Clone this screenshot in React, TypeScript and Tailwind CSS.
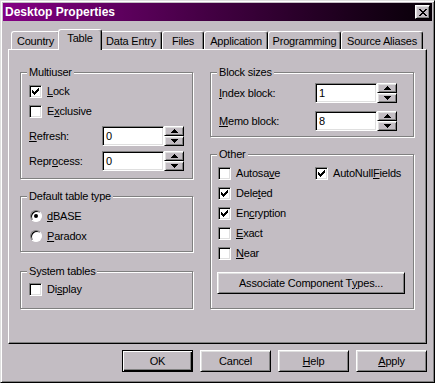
import type { ReactNode } from 'react'

const sunken =
  'border border-t-[#808080] border-l-[#808080] border-b-white border-r-white shadow-[inset_1px_1px_#000,inset_-1px_-1px_#dfdfdf]'
const raised =
  'border border-t-white border-l-white border-b-black border-r-black shadow-[inset_1px_1px_#dfdfdf,inset_-1px_-1px_#808080]'

function CheckBox({ checked }: { checked?: boolean }) {
  return (
    <span className={`w-[13px] h-[13px] shrink-0 bg-white flex items-center justify-center ${sunken}`}>
      {checked && (
        <svg width="7" height="7" viewBox="0 0 7 7" shapeRendering="crispEdges">
          <path
            d="M6 0h1v1h-1z M5 1h2v1h-2z M0 2h1v1h-1z M4 2h3v1h-3z M0 3h2v1h-2z M3 3h3v1h-3z M0 4h5v1h-5z M1 5h3v1h-3z M2 6h1v1h-1z"
            fill="#000"
          />
        </svg>
      )}
    </span>
  )
}

function Radio({ on }: { on?: boolean }) {
  return (
    <span className="w-[12px] h-[12px] shrink-0 rounded-full bg-white border border-t-[#808080] border-l-[#808080] border-b-white border-r-white shadow-[inset_1px_1px_#000] flex items-center justify-center">
      {on && <span className="w-[4px] h-[4px] rounded-full bg-black" />}
    </span>
  )
}

function Row({ children }: { children: ReactNode }) {
  return <div className="h-[20px] flex items-center gap-[5px]">{children}</div>
}

function Arrow({ up }: { up?: boolean }) {
  return (
    <svg width="7" height="4" viewBox="0 0 7 4" shapeRendering="crispEdges">
      <path
        d={
          up
            ? 'M3 0h1v1h-1z M2 1h3v1h-3z M1 2h5v1h-5z M0 3h7v1h-7z'
            : 'M0 0h7v1h-7z M1 1h5v1h-5z M2 2h3v1h-3z M3 3h1v1h-1z'
        }
        fill="#000"
      />
    </svg>
  )
}

function Spin({ value }: { value: string }) {
  return (
    <div className="flex">
      <div className={`w-[62px] h-[20px] bg-white pl-[3px] flex items-center ${sunken}`}>{value}</div>
      <div className="w-[20px] h-[20px] flex flex-col">
        <div className={`h-[10px] flex items-center justify-center bg-[#c3bdc3] ${raised}`}>
          <Arrow up />
        </div>
        <div className={`h-[10px] flex items-center justify-center bg-[#c3bdc3] ${raised}`}>
          <Arrow />
        </div>
      </div>
    </div>
  )
}

function Group({ title, className, children }: { title: string; className: string; children: ReactNode }) {
  return (
    <div className={`relative border border-[#808080] shadow-[inset_1px_1px_#fff,1px_1px_#fff] ${className}`}>
      <span className="absolute -top-[7px] left-[6px] px-[2px] bg-[#c3bdc3] leading-[13px]">{title}</span>
      {children}
    </div>
  )
}

function Tab({ label, w, active }: { label: string; w: string; active?: boolean }) {
  if (active) {
    return (
      <div
        className={`${w} -mx-[2px] -mb-px h-[21px] relative z-10 bg-[#c3bdc3] rounded-t-[3px] border-t border-l border-r border-t-white border-l-white border-r-black shadow-[inset_-1px_0_#808080] flex justify-center pt-[2px]`}
      >
        {label}
      </div>
    )
  }
  return (
    <div
      className={`${w} h-[18px] rounded-t-[3px] border-t border-l border-r border-t-white border-l-white border-r-black shadow-[inset_-1px_0_#808080] flex items-center justify-center pt-px`}
    >
      {label}
    </div>
  )
}

function Button({ children, def, w = 'w-[71px]' }: { children: ReactNode; def?: boolean; w?: string }) {
  const frame = def
    ? 'border border-black shadow-[inset_1px_1px_#fff,inset_-1px_-1px_#000,inset_-2px_-2px_#808080]'
    : raised
  return <div className={`${w} h-[22px] flex items-center justify-center bg-[#c3bdc3] ${frame}`}>{children}</div>
}

export default function App() {
  return (
    <div className="w-[435px] h-[383px] p-[2px] bg-[#c3bdc3] border border-t-[#dfdfdf] border-l-[#dfdfdf] border-b-black border-r-black shadow-[inset_1px_1px_#fff,inset_-1px_-1px_#808080] font-['Liberation_Sans',Arial,sans-serif] text-[11px] tracking-[-0.2px] text-black leading-[13px] select-none">
      {/* title bar */}
      <div className="h-[18px] flex items-center justify-between bg-gradient-to-r from-[#840084] to-[#080008] pl-[2px] pr-[2px]">
        <span className="text-white font-bold text-[12px] tracking-normal">Desktop Properties</span>
        <div className={`w-[15px] h-[14px] bg-[#c3bdc3] flex items-center justify-center ${raised}`}>
          <svg width="8" height="7" viewBox="0 0 8 7" shapeRendering="crispEdges">
            <path
              d="M0 0h2v1h-2z M6 0h2v1h-2z M1 1h2v1h-2z M5 1h2v1h-2z M2 2h4v1h-4z M3 3h2v1h-2z M2 4h4v1h-4z M1 5h2v1h-2z M5 5h2v1h-2z M0 6h2v1h-2z M6 6h2v1h-2z"
              fill="#000"
            />
          </svg>
        </div>
      </div>

      {/* tabs */}
      <div className="mt-[8px] pl-[8px] flex items-end">
        <Tab label="Country" w="w-[49px]" />
        <Tab label="Table" w="w-[44px]" active />
        <Tab label="Data Entry" w="w-[62px]" />
        <Tab label="Files" w="w-[42px]" />
        <Tab label="Application" w="w-[64px]" />
        <Tab label="Programming" w="w-[73px]" />
        <Tab label="Source Aliases" w="w-[82px]" />
      </div>

      {/* tab page */}
      <div className="ml-[5px] w-[419px] h-[295px] border border-t-white border-l-white border-b-black border-r-black shadow-[inset_-1px_-1px_#808080] pt-[22px] pl-[11px] flex gap-[17px]">
        <div className="w-[173px] flex flex-col">
          <Group title="Multiuser" className="h-[107px] pt-[8px] pl-[8px]">
            <Row>
              <CheckBox checked />
              <span>
                <u>L</u>ock
              </span>
            </Row>
            <Row>
              <CheckBox />
              <span>
                E<u>x</u>clusive
              </span>
            </Row>
            <div className="mt-[5px] flex items-center">
              <span className="w-[73px]">
                <u>R</u>efresh:
              </span>
              <Spin value="0" />
            </div>
            <div className="mt-[5px] flex items-center">
              <span className="w-[73px]">
                Repr<u>o</u>cess:
              </span>
              <Spin value="0" />
            </div>
          </Group>

          <Group title="Default table type" className="mt-[17px] h-[56px] pt-[9px] pl-[9px]">
            <Row>
              <Radio on />
              <span>
                <u>d</u>BASE
              </span>
            </Row>
            <Row>
              <Radio />
              <span>
                <u>P</u>aradox
              </span>
            </Row>
          </Group>

          <Group title="System tables" className="mt-[19px] h-[38px] pt-[7px] pl-[8px]">
            <Row>
              <CheckBox />
              <span>
                Di<u>s</u>play
              </span>
            </Row>
          </Group>
        </div>

        <div className="w-[204px] flex flex-col">
          <Group title="Block sizes" className="h-[65px] pt-[10px] pl-[8px]">
            <div className="flex items-center">
              <span className="w-[96px]">
                <u>I</u>ndex block:
              </span>
              <Spin value="1" />
            </div>
            <div className="mt-[8px] flex items-center">
              <span className="w-[96px]">
                <u>M</u>emo block:
              </span>
              <Spin value="8" />
            </div>
          </Group>

          <Group title="Other" className="mt-[17px] h-[155px] pt-[8px] pl-[7px]">
            <div className="grid grid-cols-[97px_1fr]">
              <Row>
                <CheckBox />
                <span>
                  Autosa<u>v</u>e
                </span>
              </Row>
              <Row>
                <CheckBox checked />
                <span>
                  AutoNull<u>F</u>ields
                </span>
              </Row>
            </div>
            <Row>
              <CheckBox checked />
              <span>
                Dele<u>t</u>ed
              </span>
            </Row>
            <Row>
              <CheckBox checked />
              <span>
                En<u>c</u>ryption
              </span>
            </Row>
            <Row>
              <CheckBox />
              <span>
                <u>E</u>xact
              </span>
            </Row>
            <Row>
              <CheckBox />
              <span>
                <u>N</u>ear
              </span>
            </Row>
            <div className="mt-[9px] -ml-px">
              <Button w="w-[188px]">
                Associate Component T<u>y</u>pes...
              </Button>
            </div>
          </Group>
        </div>
      </div>

      {/* dialog buttons */}
      <div className="mt-[6px] pr-[5px] flex justify-end gap-[7px]">
        <Button def>OK</Button>
        <Button>Cancel</Button>
        <Button>
          <u>H</u>elp
        </Button>
        <Button>
          <u>A</u>pply
        </Button>
      </div>
    </div>
  )
}
